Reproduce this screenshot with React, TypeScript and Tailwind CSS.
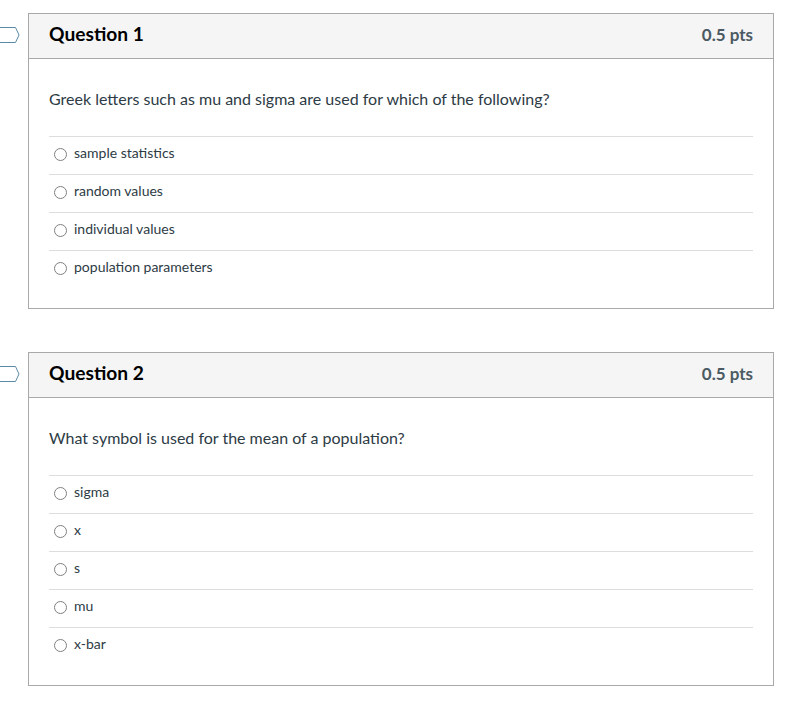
const questions = [
  {
    title: "Question 1",
    text: "Greek letters such as mu and sigma are used for which of the following?",
    answers: ["sample statistics", "random values", "individual values", "population parameters"],
  },
  {
    title: "Question 2",
    text: "What symbol is used for the mean of a population?",
    answers: ["sigma", "x", "s", "mu", "x-bar"],
  },
]

function Flag() {
  return (
    <svg className="absolute left-[-29px] top-[13px]" width="20" height="17" viewBox="0 0 20 17" fill="none">
      <path d="M-2 0.5H15.5L19 8L15.5 15.5H-2" stroke="#5b8aa8" strokeWidth="1" />
    </svg>
  )
}

export default function App() {
  return (
    <div className="min-h-[705px] bg-white pt-[13px] pl-[28px] font-['Lato',sans-serif] overflow-hidden">
      <div className="flex w-[746px] flex-col gap-[43px]">
        {questions.map((q) => (
          <div key={q.title} className="relative border border-[#a9a9a9] bg-white">
            <Flag />
            {/* Header */}
            <div className="flex h-[45px] items-center justify-between border-b border-[#a9a9a9] bg-[#f5f5f5] px-5 pb-[3px]">
              <h2 className="pb-[1px] text-[19.2px] leading-none font-bold text-black">{q.title}</h2>
              <span className="pb-[1px] text-[17px] leading-none font-bold text-[#4b5a63]">0.5 pts</span>
            </div>

            <div className="px-5 pt-[30px] pb-5">
              <p className="mb-[27px] text-[16px] leading-[20px] text-[#2d3b45]">{q.text}</p>
              <div>
                {q.answers.map((a) => (
                  <div key={a} className="flex h-[38px] items-center border-t border-[#dddddd] pl-[5px]">
                    <span className="mr-[7px] mb-[2px] h-[13px] w-[13px] rounded-full border border-[#808080] bg-white" />
                    <span className="pb-[6px] text-[14px] leading-none text-[#2d3b45]">{a}</span>
                  </div>
                ))}
              </div>
            </div>
          </div>
        ))}
      </div>
    </div>
  )
}
